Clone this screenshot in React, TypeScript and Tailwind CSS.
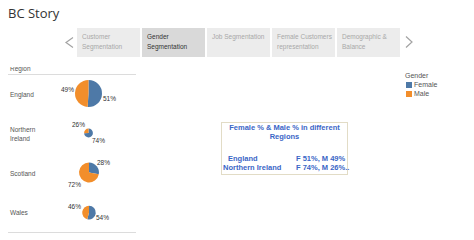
import React from 'react';

const tabs = [
    { id: 1, lines: ['Customer', 'Segmentation'], active: false },
    { id: 2, lines: ['Gender', 'Segmentation'], active: true },
    { id: 3, lines: ['Job Segmentation'], active: false },
    { id: 4, lines: ['Female Customers', 'representation'], active: false },
    { id: 5, lines: ['Demographic &', 'Balance'], active: false },
];

type Lbl = { x: number; y: number; t: string };
const regions: { name: string[]; cx: number; cy: number; r: number; f: number; labels: Lbl[] }[] = [
    { name: ['England'], cx: 30.5, cy: 18.5, r: 13.5, f: 0.51, labels: [{ x: 3, y: 17, t: '49%' }, { x: 45, y: 26, t: '51%' }] },
    { name: ['Northern', 'Ireland'], cx: 30.5, cy: 19, r: 4.4, f: 0.74, labels: [{ x: 14, y: 12.75, t: '26%' }, { x: 34, y: 29.25, t: '74%' }] },
    { name: ['Scotland'], cx: 31, cy: 18.5, r: 10, f: 0.28, labels: [{ x: 39, y: 10.5, t: '28%' }, { x: 10, y: 32.5, t: '72%' }] },
    { name: ['Wales'], cx: 31, cy: 19.6, r: 6.8, f: 0.54, labels: [{ x: 10, y: 16, t: '46%' }, { x: 38, y: 27.25, t: '54%' }] },
];

const pt = (cx: number, cy: number, r: number, f: number) => {
    const a = 2 * Math.PI * f;
    return `${cx + r * Math.sin(a)} ${cy - r * Math.cos(a)}`;
};

const slice = (cx: number, cy: number, r: number, s: number, e: number) =>
    `M ${cx} ${cy} L ${pt(cx, cy, r, s)} A ${r} ${r} 0 ${e - s > 0.5 ? 1 : 0} 1 ${pt(cx, cy, r, e)} Z`;

const App: React.FC = () => {
    return (
        <div className="w-[474px] h-[240px] bg-white overflow-hidden font-['Liberation_Sans',Arial,sans-serif] text-[#555]">
            <div className="pl-[8px] pt-[5px] text-[13px] leading-[16px] text-[#333] font-['Open_Sans',sans-serif]">BC Story</div>

            {/* story points */}
            <div className="flex items-start ml-[63px] mt-[7px] h-[29px]">
                <svg width="12" height="29" className="mr-[2px]">
                    <polyline points="10,9.5 3,14.5 10,19.5" fill="none" stroke="#a3a3a3" strokeWidth="1.2" />
                </svg>
                <div className="flex gap-[2px]">
                    {tabs.map(tab => (
                        <div
                            key={tab.id}
                            className={`w-[63px] h-[29px] pl-[5px] pt-[4px] text-[6.5px] leading-[10px] ${
                                tab.active ? 'bg-[#d9d9d9] text-[#333]' : 'bg-[#ececec] text-[#a8a8a8]'
                            }`}
                        >
                            {tab.lines.map(l => <div key={l}>{l}</div>)}
                        </div>
                    ))}
                </div>
                <svg width="10" height="29" className="ml-[4px]">
                    <polyline points="2,8.5 8,14 2,19.5" fill="none" stroke="#a3a3a3" strokeWidth="1.2" />
                </svg>
            </div>

            <div className="flex items-start">
                {/* pie list */}
                <div className="ml-[8px] mt-[10px] w-[128px]">
                    <div className="h-[7px] overflow-hidden">
                        <div className="pl-[2px] mt-[-2px] text-[6.5px] leading-[7px]">Region</div>
                    </div>
                    <div className="border-t border-b border-[#dcdcdc]">
                        {regions.map(r => (
                            <div key={r.name[0]} className="flex items-center h-[39.25px]">
                                <div className="w-[50px] pl-[2px] text-[6.5px] leading-[9px]">
                                    {r.name.map(n => <div key={n}>{n}</div>)}
                                </div>
                                <svg width="78" height="39.25" className="overflow-visible">
                                    <path d={slice(r.cx, r.cy, r.r, 0, r.f)} fill="#4e79a7" />
                                    <path d={slice(r.cx, r.cy, r.r, r.f, 1)} fill="#f28e2b" />
                                    {r.labels.map(l => (
                                        <text key={l.t} x={l.x} y={l.y} fontSize="6.5" fill="#333" fontFamily="Liberation Sans, Arial, sans-serif">{l.t}</text>
                                    ))}
                                </svg>
                            </div>
                        ))}
                    </div>
                </div>

                {/* annotation */}
                <div className="ml-[85px] mt-[65px] w-[127px] h-[53px] border border-[#e2dcc6] text-[#3a66c6] text-[7.5px] font-bold whitespace-nowrap">
                    <div className="text-center leading-[8.5px] pt-[1px]">
                        <div>Female % &amp; Male % in different</div>
                        <div>Regions</div>
                    </div>
                    <div className="mt-[14px] leading-[8.5px]">
                        <div className="flex">
                            <div className="w-[74px] shrink-0 pl-[6px]">England</div>
                            <div>F 51%, M 49%</div>
                        </div>
                        <div className="flex">
                            <div className="w-[74px] shrink-0 pl-[1px]">Northern Ireland</div>
                            <div>F 74%, M 26%..</div>
                        </div>
                    </div>
                </div>

                {/* legend */}
                <div className="ml-[57px] mt-[14px] text-[7px] leading-[9px] text-[#555]">
                    <div>Gender</div>
                    <div className="flex items-center">
                        <span className="w-[6px] h-[6px] bg-[#4e79a7] ml-[1px] mr-[2px]" />
                        Female
                    </div>
                    <div className="flex items-center">
                        <span className="w-[6px] h-[6px] bg-[#f28e2b] ml-[1px] mr-[2px]" />
                        Male
                    </div>
                </div>
            </div>
        </div>
    );
};

export default App;
